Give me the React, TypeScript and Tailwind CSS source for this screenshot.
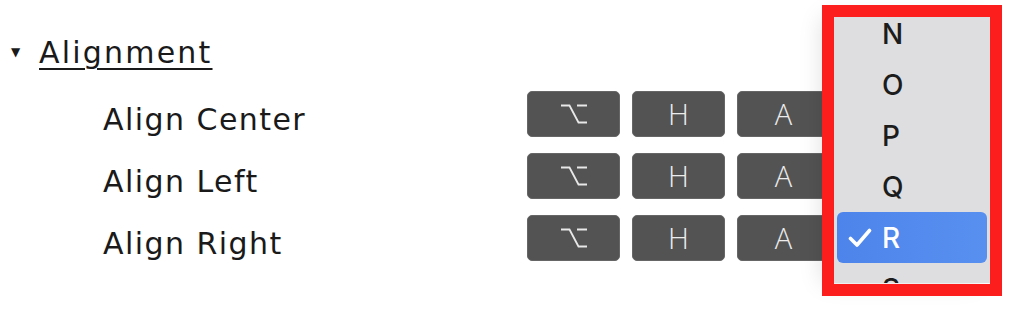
import React from "react";

const rows = ["Align Center", "Align Left", "Align Right"];
const letters = ["N", "O", "P", "Q", "R", "S"];

const OptionGlyph = () => (
  <svg width="26" height="20" viewBox="0 0 26 20" fill="none">
    <path d="M0 1.5 H8.5 L17.5 18.5 H26 M16 1.5 H26" stroke="#e8e8e8" strokeWidth="1.8" />
  </svg>
);

const Key = ({ children }: { children: React.ReactNode }) => (
  <div className="flex h-[46px] w-[93px] shrink-0 items-center justify-center rounded-[5px] border border-[#666666] bg-[#535353] font-['Open_Sans',sans-serif] text-[29px] font-light text-[#ececec]">
    {children}
  </div>
);

export default function App() {
  return (
    <div className="relative h-[314px] w-[1012px] overflow-hidden bg-white font-['DejaVu_Sans',sans-serif] text-[#1a1a1a]">
      <div className="pt-[22px]">
        <div className="flex h-[60px] items-center">
          <span className="ml-[11px] w-[28px] text-[12px] leading-none">▼</span>
          <span className="mt-[1px] text-[30px] tracking-[2.2px] underline decoration-[1.5px] underline-offset-[5px]">
            Alignment
          </span>
        </div>

        {rows.map((label, i) => (
          <div key={label} className={i === 0 ? "mt-[1px] flex h-[62px] items-center" : "flex h-[62px] items-center"}>
            <span className="mt-[10px] w-[527px] shrink-0 pl-[103px] text-[30px] tracking-[1.45px]">
              {label}
            </span>
            <div className="flex gap-[12px]">
              <Key>
                <OptionGlyph />
              </Key>
              <Key>H</Key>
              <Key>A</Key>
            </div>
          </div>
        ))}
      </div>

      {/* popup menu */}
      <div className="absolute left-[834px] top-[17px] h-[266px] w-[156px] overflow-hidden bg-[#dedee0] shadow-[-12px_0_22px_rgba(0,0,0,0.13)]">
        <div className="mt-[-9px] px-[3px]">
          {letters.map((l) => (
            <div
              key={l}
              className={
                l === "R"
                  ? "relative flex h-[51px] items-center rounded-[6px] bg-gradient-to-r from-[#4d84eb] to-[#5890f0] pl-[45px] font-['Inter',sans-serif] text-[28px] font-medium text-white"
                  : "relative flex h-[51px] items-center pl-[45px] font-['Inter',sans-serif] text-[28px] font-medium text-[#1c1c1c]"
              }
            >
              {l === "R" && (
                <svg className="absolute left-[11px] top-[16px]" width="24" height="20" viewBox="0 0 24 20" fill="none">
                  <path d="M2.5 10.5 L9 17 L21.5 2.5" stroke="white" strokeWidth="3.6" strokeLinecap="round" strokeLinejoin="round" />
                </svg>
              )}
              {l}
            </div>
          ))}
        </div>
      </div>

      {/* highlight frame */}
      <div className="absolute left-[822px] top-[5px] h-[291px] w-[180px] border-[12px] border-[#fc1d1d]" />
    </div>
  );
}
